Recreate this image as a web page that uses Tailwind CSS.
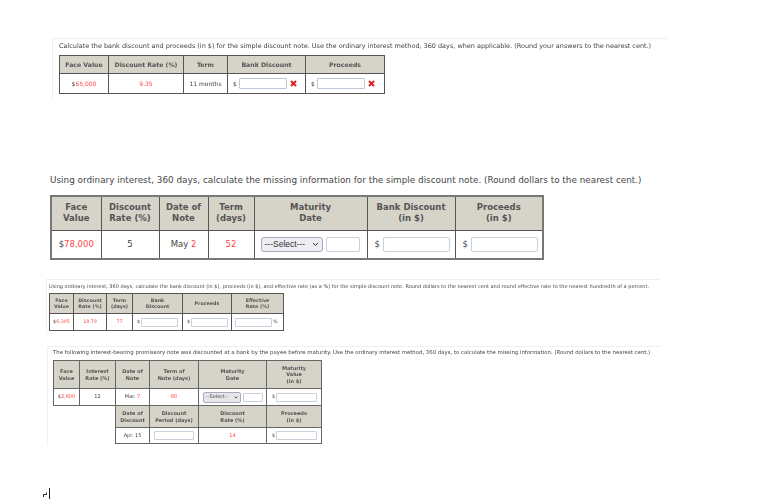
<!DOCTYPE html>
<html><head><meta charset="utf-8"><script src="https://cdn.jsdelivr.net/npm/@tailwindcss/browser@4"></script></head>
<body class="bg-white">
<div class="w-[760px] h-[499px] overflow-hidden relative font-['DejaVu_Sans',sans-serif] text-[#444]">

<!-- Section 1 -->
<section class="ml-[52px] mt-[38px] w-[615px] h-[60px] border-t border-l border-[#eeeeee] pl-[6px] pt-[3px] blur-[0.35px]">
  <p class="text-[6.47px] leading-[8px] whitespace-nowrap">Calculate the bank discount and proceeds (in $) for the simple discount note. Use the ordinary interest method, 360 days, when applicable. (Round your answers to the nearest cent.)</p>
  <table class="mt-[5px] table-fixed border-collapse border border-[#666] text-[6px] text-center w-[325px]">
    <thead><tr class="h-[18px] bg-[#d6d3c8] font-bold text-[#555] text-[6.2px]">
      <th class="w-[49px] border border-[#555]">Face Value</th><th class="w-[75px] border border-[#555]">Discount Rate (%)</th><th class="w-[44px] border border-[#555]">Term</th><th class="w-[78px] border border-[#555]">Bank Discount</th><th class="w-[79px] border border-[#555]">Proceeds</th>
    </tr></thead>
    <tbody><tr class="h-[20px]">
      <td class="border border-[#555]">$<span class="text-[#f44]">65,000</span></td>
      <td class="border border-[#555] text-[#f44]">9.35</td>
      <td class="border border-[#555]">11 months</td>
      <td class="border border-[#555]"><div class="flex items-center pl-[5px] gap-[2px]"><span>$</span><span class="w-[48px] h-[11px] border border-[#bcc8d8] rounded-[1px]"></span><svg class="ml-[1px]" width="7" height="7" viewBox="0 0 7 7"><path d="M1 1L6 6M6 1L1 6" stroke="#d22" stroke-width="2"/></svg></div></td>
      <td class="border border-[#555]"><div class="flex items-center pl-[5px] gap-[2px]"><span>$</span><span class="w-[48px] h-[11px] border border-[#bcc8d8] rounded-[1px]"></span><svg class="ml-[1px]" width="7" height="7" viewBox="0 0 7 7"><path d="M1 1L6 6M6 1L1 6" stroke="#d22" stroke-width="2"/></svg></div></td>
    </tr></tbody>
  </table>
</section>

<!-- Section 2 -->
<section class="ml-[50px] mt-[76px]">
  <p class="text-[8.85px] leading-[12px] whitespace-nowrap">Using ordinary interest, 360 days, calculate the missing information for the simple discount note. (Round dollars to the nearest cent.)</p>
  <table class="mt-[9px] table-fixed border-collapse border-2 border-[#777] text-[8.5px] text-center w-[492px]">
    <thead><tr class="h-[34px] bg-[#d6d3c8] font-bold text-[#555] leading-[11px]">
      <th class="w-[50px] border border-[#555]">Face<br>Value</th><th class="w-[58px] border border-[#555]">Discount<br>Rate (%)</th><th class="w-[49px] border border-[#555]">Date of<br>Note</th><th class="w-[46px] border border-[#555]">Term<br>(days)</th><th class="w-[113px] border border-[#555]">Maturity<br>Date</th><th class="w-[88px] border border-[#555]">Bank Discount<br>(in $)</th><th class="w-[88px] border border-[#555]">Proceeds<br>(in $)</th>
    </tr></thead>
    <tbody><tr class="h-[29px]">
      <td class="border border-[#555]">$<span class="text-[#f44]">78,000</span></td>
      <td class="border border-[#555]">5</td>
      <td class="border border-[#555]">May <span class="text-[#f44]">2</span></td>
      <td class="border border-[#555] text-[#f44]">52</td>
      <td class="border border-[#555]"><div class="flex items-center pl-[6px] gap-[3px]"><span class="w-[62px] h-[15px] bg-[#eeeef2] border border-[#aab] rounded-[3px] flex items-center justify-between px-[3px] font-['Liberation_Sans',sans-serif] text-[8.5px] text-[#333]">---Select---<svg width="7" height="5" viewBox="0 0 7 5"><path d="M1 1L3.5 3.5L6 1" fill="none" stroke="#333" stroke-width="1"/></svg></span><span class="w-[34px] h-[15px] border border-[#c8d0dc] rounded-[2px]"></span></div></td>
      <td class="border border-[#555]"><div class="flex items-center pl-[7px] gap-[3px]"><span>$</span><span class="w-[67px] h-[15px] border border-[#c8d0dc] rounded-[2px]"></span></div></td>
      <td class="border border-[#555]"><div class="flex items-center pl-[7px] gap-[3px]"><span>$</span><span class="w-[67px] h-[15px] border border-[#c8d0dc] rounded-[2px]"></span></div></td>
    </tr></tbody>
  </table>
</section>

<!-- Section 3 -->
<section class="ml-[46px] mt-[19px] w-[614px] h-[55px] border-t border-l border-[#f0f0f0] pl-[2px] pt-[2px] blur-[0.35px]">
  <p class="text-[5px] leading-[8px] whitespace-nowrap">Using ordinary interest, 360 days, calculate the bank discount (in $), proceeds (in $), and effective rate (as a %) for the simple discount note. Round dollars to the nearest cent and round effective rate to the nearest hundredth of a percent.</p>
  <table class="mt-[3px] table-fixed border-collapse border border-[#666] text-[4.8px] text-center w-[234px]">
    <thead><tr class="h-[20px] bg-[#d6d3c8] font-bold text-[#555] leading-[6px]">
      <th class="w-[24px] border border-[#555]">Face<br>Value</th><th class="w-[33px] border border-[#555]">Discount<br>Rate (%)</th><th class="w-[26px] border border-[#555]">Term<br>(days)</th><th class="w-[50px] border border-[#555]">Bank<br>Discount</th><th class="w-[49px] border border-[#555]">Proceeds</th><th class="w-[52px] border border-[#555]">Effective<br>Rate (%)</th>
    </tr></thead>
    <tbody><tr class="h-[17px]">
      <td class="border border-[#555]">$<span class="text-[#f44]">6,305</span></td>
      <td class="border border-[#555] text-[#f44]">18.79</td>
      <td class="border border-[#555] text-[#f44]">77</td>
      <td class="border border-[#555]"><div class="flex items-center pl-[4px] gap-[1px]"><span>$</span><span class="w-[37px] h-[9px] border border-[#c8d0dc] rounded-[1px]"></span></div></td>
      <td class="border border-[#555]"><div class="flex items-center pl-[4px] gap-[1px]"><span>$</span><span class="w-[37px] h-[9px] border border-[#c8d0dc] rounded-[1px]"></span></div></td>
      <td class="border border-[#555]"><div class="flex items-center pl-[3px] gap-[1px]"><span class="w-[37px] h-[9px] border border-[#c8d0dc] rounded-[1px]"></span><span>%</span></div></td>
    </tr></tbody>
  </table>
</section>

<!-- Section 4 -->
<section class="ml-[47px] mt-[12px] w-[614px] h-[100px] border-t border-l border-[#f0f0f0] pl-[5px] pt-[1px] blur-[0.35px]">
  <p class="text-[5.39px] leading-[8px] whitespace-nowrap">The following interest-bearing promissory note was discounted at a bank by the payee before maturity. Use the ordinary interest method, 360 days, to calculate the missing information. (Round dollars to the nearest cent.)</p>
  <table class="mt-[4px] table-fixed border-collapse text-[5px] text-center w-[268px]">
    <thead><tr class="h-[28px] bg-[#d6d3c8] font-bold text-[#555] leading-[6.5px]">
      <th class="w-[26px] border border-[#666]">Face<br>Value</th><th class="w-[36px] border border-[#666]">Interest<br>Rate (%)</th><th class="w-[34px] border border-[#666]">Date of<br>Note</th><th class="w-[49px] border border-[#666]">Term of<br>Note (days)</th><th class="w-[68px] border border-[#666]">Maturity<br>Date</th><th class="w-[55px] border border-[#666]">Maturity<br>Value<br>(in $)</th>
    </tr></thead>
    <tbody>
    <tr class="h-[17px]">
      <td class="border border-[#666]">$<span class="text-[#f44]">2,600</span></td>
      <td class="border border-[#666]">12</td>
      <td class="border border-[#666]">Mar. <span class="text-[#f44]">7</span></td>
      <td class="border border-[#666] text-[#f44]">80</td>
      <td class="border border-[#666]"><div class="flex items-center pl-[4px] gap-[2px]"><span class="w-[38px] h-[11px] bg-[#e6e6ea] border border-[#aab] rounded-[2px] flex items-center justify-between px-[2px]">--Select--<svg width="4" height="3" viewBox="0 0 7 5"><path d="M1 1L3.5 3.5L6 1" fill="none" stroke="#333" stroke-width="1.5"/></svg></span><span class="w-[20px] h-[9px] border border-[#c8d0dc] rounded-[1px]"></span></div></td>
      <td class="border border-[#666]"><div class="flex items-center pl-[5px] gap-[1px]"><span>$</span><span class="w-[41px] h-[9px] border border-[#c8d0dc] rounded-[1px]"></span></div></td>
    </tr>
    <tr class="h-[22px] font-bold text-[#555] leading-[6.5px]">
      <td colspan="2" class="bg-white border-t border-[#666]"></td>
      <td class="bg-[#d6d3c8] border border-[#666]">Date of<br>Discount</td>
      <td class="bg-[#d6d3c8] border border-[#666]">Discount<br>Period (days)</td>
      <td class="bg-[#d6d3c8] border border-[#666]">Discount<br>Rate (%)</td>
      <td class="bg-[#d6d3c8] border border-[#666]">Proceeds<br>(in $)</td>
    </tr>
    <tr class="h-[16px]">
      <td colspan="2"></td>
      <td class="border border-[#666]">Apr. 15</td>
      <td class="border border-[#666]"><span class="block mx-auto w-[40px] h-[9px] border border-[#c8d0dc] rounded-[1px]"></span></td>
      <td class="border border-[#666] text-[#f44]">14</td>
      <td class="border border-[#666]"><div class="flex items-center pl-[5px] gap-[1px]"><span>$</span><span class="w-[41px] h-[9px] border border-[#c8d0dc] rounded-[1px]"></span></div></td>
    </tr>
    </tbody>
  </table>
</section>

<!-- cursor mark -->
<svg class="absolute left-[43px] top-[488px]" width="9" height="11" viewBox="0 0 9 11"><path d="M0.5 9V6.5H3.5V4.5M6.5 0V11" fill="none" stroke="#222" stroke-width="1"/></svg>
</div>
</body></html>
